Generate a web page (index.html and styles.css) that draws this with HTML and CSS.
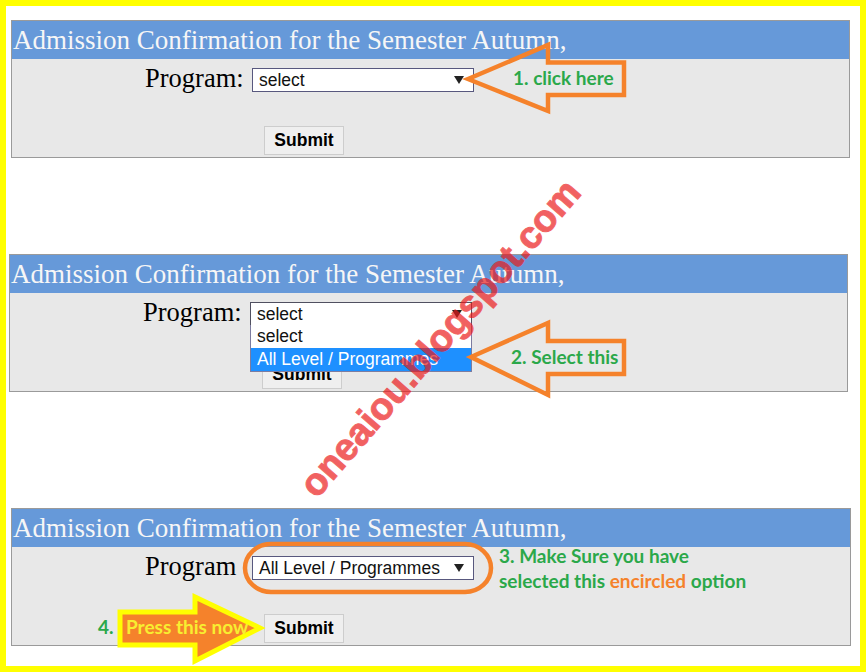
FILE: index.html
```html
<!DOCTYPE html>
<html lang="en">
<head>
<meta charset="utf-8">
<title>Admission Confirmation</title>
<link rel="stylesheet" href="styles.css">
</head>
<body>
<div class="page">
  <div class="frame">
    <section class="panel panel-a">
      <div class="panel-head">Admission Confirmation for the Semester Autumn,</div>
      <div class="panel-body">
        <div class="field">
          <span class="label">Program:</span>
          <div class="select"><span class="select-text">select</span><span class="caret"></span></div>
        </div>
        <div class="actions"><button class="submit" type="button">Submit</button></div>
      </div>
    </section>

    <section class="panel panel-b">
      <div class="panel-head">Admission Confirmation for the Semester Autumn,</div>
      <div class="panel-body">
        <div class="field">
          <span class="label">Program:</span>
          <div class="select select-open"><span class="select-text">select</span><span class="caret"></span>
            <ul class="options">
              <li class="option">select</li>
              <li class="option option-active">All Level / Programmes</li>
            </ul>
          </div>
        </div>
        <div class="actions"><button class="submit" type="button">Submit</button></div>
      </div>
    </section>

    <section class="panel panel-c">
      <div class="panel-head">Admission Confirmation for the Semester Autumn,</div>
      <div class="panel-body">
        <div class="field">
          <span class="label">Program</span>
          <div class="select"><span class="select-text">All Level / Programmes</span><span class="caret"></span></div>
        </div>
        <div class="actions"><button class="submit" type="button">Submit</button></div>
      </div>
    </section>
  </div>

  <svg class="overlay" width="866" height="672" viewBox="0 0 866 672" xmlns="http://www.w3.org/2000/svg">
    <polygon class="arrow-outline" points="468,79 548,45 548,62.5 624,62.5 624,95 548,95 548,111"/>
    <text class="note" x="513" y="85">1. click here</text>

    <polygon class="arrow-outline" points="471,357 548,323 548,341 624,341 624,374 548,374 548,395"/>
    <text class="note" x="511" y="364">2. Select this</text>

    <rect class="ring" x="245" y="544" width="246" height="48" rx="26" ry="24"/>
    <text class="note" x="499" y="563">3. Make Sure you have</text>
    <text class="note" x="499" y="588">selected this <tspan class="note-orange">encircled</tspan> option</text>

    <polygon class="arrow-fill" points="120,612 195,612 195,597 260,628 195,661 195,645 120,645"/>
    <text class="note" x="98" y="634">4.</text>
    <text class="note note-yellow" x="126" y="634">Press this now</text>
  </svg>

  <div class="watermark">oneaiou.blogspot.com</div>
</div>
</body>
</html>
```

FILE: styles.css
```css
* {
  box-sizing: border-box;
}

html, body {
  margin: 0;
  padding: 0;
  background: #ffffff;
}

.page {
  position: relative;
  width: 866px;
  height: 672px;
  overflow: hidden;
}

.frame {
  width: 866px;
  height: 672px;
  border: 6px solid #ffff00;
  background: #ffffff;
  display: flex;
  flex-direction: column;
}

.panel {
  border: 1px solid #9a9a9a;
  background: #e8e8e8;
}

.panel-a {
  margin: 14px 10px 0 5px;
}

.panel-b {
  margin: 96px 12px 0 3px;
}

.panel-c {
  margin: 116px 9px 0 5px;
}

.panel-head {
  height: 38px;
  background: #6699d9;
  color: #f6f6f6;
  font-family: "Liberation Serif", "Times New Roman", serif;
  font-size: 27px;
  line-height: 38px;
  padding-left: 1px;
  white-space: nowrap;
  overflow: hidden;
}

.panel-body {
  padding: 9px 0 2px 0;
  height: 98px;
}

.field {
  display: flex;
  align-items: flex-start;
  gap: 8px;
  margin-left: 133px;
  height: 24px;
}

.label {
  width: 99px;
  flex: none;
  font-family: "Liberation Serif", "Times New Roman", serif;
  font-size: 26.5px;
  line-height: 21px;
  color: #000000;
  white-space: nowrap;
}

.select {
  position: relative;
  width: 222px;
  height: 24px;
  border: 1px solid #58587e;
  background: #ffffff;
  display: flex;
  align-items: center;
  padding: 0 9px 0 6px;
  font-family: "Liberation Sans", Arial, sans-serif;
  font-size: 17.5px;
  line-height: 22px;
  color: #111111;
}

.select-open {
  border-color: #505060;
}

.select-text {
  white-space: nowrap;
}

.caret {
  margin-left: auto;
  width: 0;
  height: 0;
  border-left: 5px solid transparent;
  border-right: 5px solid transparent;
  border-top: 8px solid #222222;
}

.options {
  position: absolute;
  top: 100%;
  left: -1px;
  width: 222px;
  margin: 0;
  padding: 0;
  list-style: none;
  background: #ffffff;
  border: 1px solid #7c7ca0;
  border-top: none;
}

.option {
  height: 23px;
  line-height: 23px;
  padding-left: 6px;
  color: #111111;
  white-space: nowrap;
}

.option-active {
  background: #1e90ff;
  color: #ffffff;
}

.actions {
  margin-top: 34px;
  margin-left: 252px;
}

.submit {
  width: 80px;
  height: 29px;
  padding: 0;
  border: 1px solid #cdcdcd;
  background: #efefef;
  font-family: "Liberation Sans", Arial, sans-serif;
  font-weight: bold;
  font-size: 17.5px;
  color: #000000;
}

.overlay {
  position: absolute;
  left: 0;
  top: 0;
  pointer-events: none;
}

.arrow-outline {
  fill: none;
  stroke: #f5822b;
  stroke-width: 4.5;
  stroke-linejoin: miter;
}

.arrow-fill {
  fill: #f5822b;
  stroke: #ffff00;
  stroke-width: 5;
  stroke-linejoin: miter;
}

.ring {
  fill: none;
  stroke: #f5822b;
  stroke-width: 4.5;
}

.note {
  font-family: Lato, "Open Sans", sans-serif;
  font-weight: bold;
  font-size: 19px;
  fill: #2ba84a;
}

.note-orange {
  fill: #f5822b;
}

.note-yellow {
  fill: #f8ee30;
}

.watermark {
  position: absolute;
  left: 440px;
  top: 338px;
  transform: translate(-50%, -50%) rotate(-49deg);
  font-family: "Liberation Sans", Arial, sans-serif;
  font-weight: bold;
  font-size: 38px;
  line-height: 1;
  white-space: nowrap;
  color: #eb1818;
  -webkit-text-stroke: 1px #eb1818;
  opacity: 0.68;
  pointer-events: none;
}
```
